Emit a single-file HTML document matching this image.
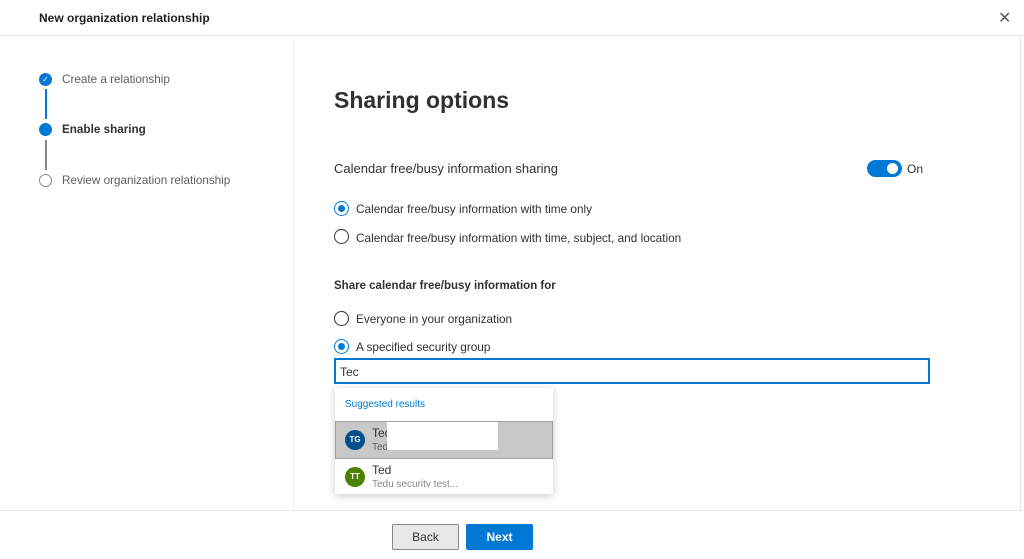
<!DOCTYPE html>
<html><head><meta charset="utf-8"><style>
*{box-sizing:border-box;margin:0;padding:0}
body{width:1024px;height:559px;background:#fff;font-family:"Liberation Sans","DejaVu Sans",sans-serif;color:#323130;position:relative;overflow:hidden;font-size:12px}
.a{position:absolute}
.rad{position:absolute;width:15px;height:15px;border-radius:50%;border:1px solid #323130;background:#fff}
.rad.on{border-color:#0078d4}
.rad.on::after{content:"";position:absolute;left:3px;top:3px;width:7px;height:7px;border-radius:50%;background:#0078d4}
.t{position:absolute;font-size:12px;color:#323130;white-space:nowrap}
.o{font-size:11.8px}
</style></head><body>
<div class="t" style="left:39px;top:11px;font-weight:bold;font-size:12px;color:#201f1e">New organization relationship</div>
<div class="a" style="left:998px;top:8px;font-size:16px;color:#605e5c">✕</div>
<div class="a" style="left:0;top:35px;width:1024px;height:1px;background:#e8e8e8"></div>
<div class="a" style="left:293px;top:36px;width:1px;height:474px;background:#eee"></div>
<div class="a" style="left:1020px;top:36px;width:1px;height:474px;background:#e8e8e8"></div>
<!-- steps -->
<div class="a" style="left:39px;top:73px;width:13px;height:13px;border-radius:50%;background:#0078d4;color:#fff;font-size:8px;text-align:center;line-height:13px">✓</div>
<div class="a" style="left:45px;top:89px;width:2px;height:30px;background:#0078d4"></div>
<div class="a" style="left:39px;top:123px;width:13px;height:13px;border-radius:50%;background:#0078d4"></div>
<div class="a" style="left:45px;top:140px;width:2px;height:30px;background:#8a8886"></div>
<div class="a" style="left:39px;top:174px;width:13px;height:13px;border-radius:50%;border:1px solid #8a8886"></div>
<div class="t" style="left:62px;top:73px;color:#605e5c;font-size:11.7px">Create a relationship</div>
<div class="t" style="left:62px;top:123px;font-weight:bold;font-size:11.7px">Enable sharing</div>
<div class="t" style="left:62px;top:174px;color:#605e5c;font-size:11.7px">Review organization relationship</div>
<!-- main -->
<div class="t" style="left:334px;top:87px;font-size:23px;font-weight:bold;color:#323130">Sharing options</div>
<div class="t" style="left:334px;top:161px;font-size:13px">Calendar free/busy information sharing</div>
<div class="a" style="left:867px;top:160px;width:35px;height:17px;border-radius:9px;background:#0078d4"></div>
<div class="a" style="left:887px;top:163px;width:11px;height:11px;border-radius:50%;background:#fff"></div>
<div class="t" style="left:907px;top:162px">On</div>
<div class="rad on" style="left:334px;top:201px"></div>
<div class="t o" style="left:356px;top:202px">Calendar free/busy information with time only</div>
<div class="rad" style="left:334px;top:229px"></div>
<div class="t o" style="left:356px;top:231px">Calendar free/busy information with time, subject, and location</div>
<div class="t" style="left:334px;top:280px;font-size:11.5px;font-weight:bold">Share calendar free/busy information for</div>
<div class="rad" style="left:334px;top:311px"></div>
<div class="t o" style="left:356px;top:312px">Everyone in your organization</div>
<div class="rad on" style="left:334px;top:339px"></div>
<div class="t o" style="left:356px;top:340px">A specified security group</div>
<div class="a" style="left:334px;top:358px;width:596px;height:26px;border:2px solid #0078d4"></div>
<div class="t" style="left:340px;top:365px">Tec</div>
<!-- dropdown -->
<div class="a" style="left:335px;top:388px;width:218px;height:106px;background:#fff;box-shadow:0 2px 8px rgba(0,0,0,.2)"></div>
<div class="t" style="left:345px;top:399px;font-size:10px;color:#0078d4">Suggested results</div>
<div class="a" style="left:335px;top:421px;width:218px;height:38px;background:#c8c8c8;border:1px solid #a0a0a0"></div>
<div class="a" style="left:345px;top:430px;width:20px;height:20px;border-radius:50%;background:#004e8c;color:#fff;font-size:8px;text-align:center;line-height:20px;font-weight:bold">TG</div>
<div class="t" style="left:372px;top:426px">Tec</div>
<div class="t" style="left:372px;top:442px;font-size:10px;color:#605e5c">Ted</div>
<div class="a" style="left:387px;top:422px;width:111px;height:28px;background:#fff"></div>
<div class="a" style="left:345px;top:467px;width:20px;height:20px;border-radius:50%;background:#498205;color:#fff;font-size:8px;text-align:center;line-height:20px;font-weight:bold">TT</div>
<div class="t" style="left:372px;top:463px">Ted</div>
<div class="t" style="left:372px;top:479px;font-size:10px;color:#8a8886;height:8px;overflow:hidden">Tedu security test...</div>
<!-- footer -->
<div class="a" style="left:0;top:510px;width:1024px;height:1px;background:#e8e8e8"></div>
<div class="a" style="left:392px;top:524px;width:67px;height:26px;background:#e8e8e8;border:1px solid #8a8886;border-radius:2px;text-align:center;line-height:24px;font-size:12px;color:#323130">Back</div>
<div class="a" style="left:466px;top:524px;width:67px;height:26px;background:#0078d4;border-radius:2px;text-align:center;line-height:26px;font-size:12px;color:#fff;font-weight:bold">Next</div>
</body></html>
